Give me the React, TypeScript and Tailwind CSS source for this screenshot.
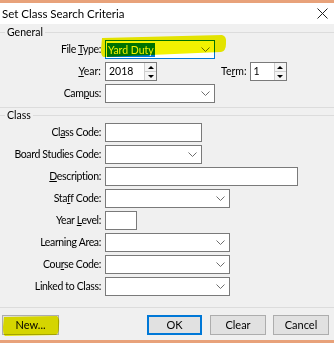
import React from "react";

const Chevron = () => (
  <svg width="9" height="5" viewBox="0 0 9 5" className="shrink-0">
    <path d="M0.5 0.5 L4.5 4.5 L8.5 0.5" fill="none" stroke="#6e6e6e" strokeWidth="1" />
  </svg>
);

const Combo = ({ w, focused, children }: { w: string; focused?: boolean; children?: React.ReactNode }) => (
  <div
    className={`${w} h-[19px] flex items-center bg-white border ${focused ? "border-[#0078d7]" : "border-[#7a7a7a]"} pl-[1px] pr-[4px]`}
  >
    <div className="flex-1 flex items-center h-full">{children}</div>
    <Chevron />
  </div>
);

const TextBox = ({ w }: { w: string }) => (
  <div className={`${w} h-[19px] bg-white border border-[#7a7a7a]`} />
);

const Spin = ({ w, value }: { w: string; value: string }) => (
  <div className={`${w} h-[19px] flex bg-white border border-[#7a7a7a]`}>
    <div className="flex-1 flex items-center pl-[3px]">{value}</div>
    <div className="w-[12px] flex flex-col border-l border-[#cfcfcf] bg-[#f4f4f4]">
      <div className="flex-1 flex items-center justify-center border-b border-[#cfcfcf]">
        <div className="w-0 h-0 border-l-[3px] border-r-[3px] border-b-[3px] border-l-transparent border-r-transparent border-b-black" />
      </div>
      <div className="flex-1 flex items-center justify-center">
        <div className="w-0 h-0 border-l-[3px] border-r-[3px] border-t-[3px] border-l-transparent border-r-transparent border-t-black" />
      </div>
    </div>
  </div>
);

const Row = ({ label, children }: { label: React.ReactNode; children: React.ReactNode }) => (
  <div className="flex items-center h-[19px]">
    <div className="w-[102px] text-right pr-[1px] whitespace-nowrap tracking-[-0.35px]">{label}</div>
    <div className="ml-[3px] flex items-center">{children}</div>
  </div>
);

const GroupHeader = ({ label }: { label: string }) => (
  <div className="flex items-center">
    <div className="w-[5px] h-px bg-[#dcdcdc]" />
    <div className="px-[2px] leading-none">{label}</div>
    <div className="flex-1 h-px bg-[#dcdcdc]" />
  </div>
);

const Btn = ({ w, children, def }: { w: string; children: React.ReactNode; def?: boolean }) => (
  <div
    className={`${w} h-[20px] flex items-center justify-center bg-[#e1e1e1] border ${def ? "border-[#0078d7] border-[2px]" : "border-[#adadad]"}`}
  >
    {children}
  </div>
);

export default function App() {
  return (
    <div className="relative w-[334px] h-[343px] overflow-hidden bg-[#f0f0f0] text-black text-[10.5px] font-['Lato',sans-serif] flex flex-col">
      <div className="h-[3px] bg-[#e8a27a] shrink-0" />
      <div className="h-[21px] bg-white flex items-center justify-between pl-[2px] pr-[6px] shrink-0 text-[11.5px]">
        <span>Set Class Search Criteria</span>
        <svg width="11" height="11" viewBox="0 0 11 11">
          <path d="M0.5 0.5 L10.5 10.5 M10.5 0.5 L0.5 10.5" stroke="#222" strokeWidth="1" />
        </svg>
      </div>

      {/* General group */}
      <div className="h-[16px] flex items-center shrink-0 pt-[1px]">
        <div className="flex-1">
          <GroupHeader label="General" />
        </div>
      </div>
      <div className="flex flex-col gap-[3px] shrink-0">
        <Row label={<>File <u>T</u>ype:</>}>
          <Combo w="w-[110px]" focused>
            <span className="bg-[#0078d7] text-white px-[1px] leading-[14px]">Yard Duty</span>
          </Combo>
        </Row>
        <div className="flex items-center h-[19px]">
          <div className="w-[102px] text-right pr-[1px]"><u>Y</u>ear:</div>
          <div className="ml-[3px]">
            <Spin w="w-[52px]" value="2018" />
          </div>
          <div className="ml-[64px] whitespace-nowrap">Te<u>r</u>m:</div>
          <div className="ml-[3px]">
            <Spin w="w-[37px]" value="1" />
          </div>
        </div>
        <Row label={<>Cam<u>p</u>us:</>}>
          <Combo w="w-[110px]" />
        </Row>
      </div>
      <div className="h-[4px] shrink-0" />
      <div className="h-px bg-[#dcdcdc] shrink-0" />

      {/* Class group */}
      <div className="h-[15px] flex items-center shrink-0">
        <div className="flex-1">
          <GroupHeader label="Class" />
        </div>
      </div>
      <div className="flex flex-col gap-[3px] shrink-0">
        <Row label={<>Cl<u>a</u>ss Code:</>}>
          <TextBox w="w-[97px]" />
        </Row>
        <Row label="Board Studies Code:">
          <Combo w="w-[97px]" />
        </Row>
        <Row label={<><u>D</u>escription:</>}>
          <TextBox w="w-[193px]" />
        </Row>
        <Row label={<>Sta<u>f</u>f Code:</>}>
          <Combo w="w-[125px]" />
        </Row>
        <Row label={<>Year <u>L</u>evel:</>}>
          <TextBox w="w-[32px]" />
        </Row>
        <Row label={<>Learnin<u>g</u> Area:</>}>
          <Combo w="w-[125px]" />
        </Row>
        <Row label={<>Cou<u>r</u>se Code:</>}>
          <Combo w="w-[125px]" />
        </Row>
        <Row label="Linked to Class:">
          <Combo w="w-[125px]" />
        </Row>
      </div>
      <div className="h-[11px] shrink-0" />
      <div className="h-px bg-[#dcdcdc] shrink-0" />
      <div className="h-[7px] shrink-0" />

      {/* Footer */}
      <div className="h-[20px] flex items-center pl-[2px] pr-[5px] shrink-0 text-[11px]">
        <Btn w="w-[57px]">New...</Btn>
        <div className="flex-1" />
        <Btn w="w-[55px]" def>OK</Btn>
        <div className="w-[8px]" />
        <Btn w="w-[56px]">Clear</Btn>
        <div className="w-[7px]" />
        <Btn w="w-[56px]">Cancel</Btn>
      </div>
      <div className="flex-1" />
      <div className="h-[3px] bg-[#e8a27a] shrink-0" />

      {/* Highlighter marks */}
      <svg
        className="absolute left-0 top-0 pointer-events-none mix-blend-multiply"
        width="334"
        height="343"
        viewBox="0 0 334 343"
      >
        <path
          d="M102 38 L222 35 Q227 36 226 44 Q226 51 221 52 L104 57 Q101 57 101 50 Z"
          fill="#f2f200"
        />
        <path
          d="M4 317 L57 316 Q60 318 59 326 Q59 334 56 335 L5 336 Q3 335 3 327 Z"
          fill="#f2f200"
        />
      </svg>
    </div>
  );
}
